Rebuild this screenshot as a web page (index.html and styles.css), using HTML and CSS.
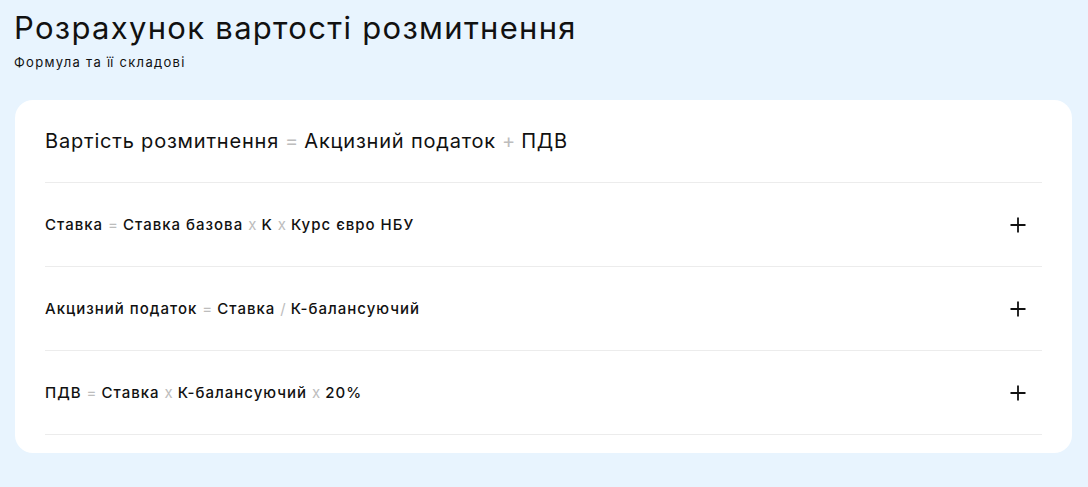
FILE: index.html
```html
<!DOCTYPE html>
<html lang="uk">
<head>
<meta charset="utf-8">
<link rel="stylesheet" href="styles.css">
</head>
<body>
<div class="page">
  <header class="head">
    <h1 class="title">Розрахунок вартості розмитнення</h1>
    <p class="subtitle">Формула та її складові</p>
  </header>
  <section class="card">
    <div class="card-head">
      <span>Вартість розмитнення</span><span class="op">=</span><span>Акцизний податок</span><span class="op">+</span><span>ПДВ</span>
    </div>
    <div class="row">
      <div class="formula"><span>Ставка</span><span class="op">=</span><span>Ставка базова</span><span class="op">x</span><span>K</span><span class="op">x</span><span>Курс євро НБУ</span></div>
      <svg class="plus" width="18" height="18" viewBox="0 0 18 18"><path d="M9 1.5v15M1.5 9h15" stroke="#111" stroke-width="1.8" fill="none"/></svg>
    </div>
    <div class="row">
      <div class="formula"><span>Акцизний податок</span><span class="op">=</span><span>Ставка</span><span class="op">/</span><span>К-балансуючий</span></div>
      <svg class="plus" width="18" height="18" viewBox="0 0 18 18"><path d="M9 1.5v15M1.5 9h15" stroke="#111" stroke-width="1.8" fill="none"/></svg>
    </div>
    <div class="row">
      <div class="formula"><span>ПДВ</span><span class="op">=</span><span>Ставка</span><span class="op">x</span><span>К-балансуючий</span><span class="op">x</span><span>20%</span></div>
      <svg class="plus" width="18" height="18" viewBox="0 0 18 18"><path d="M9 1.5v15M1.5 9h15" stroke="#111" stroke-width="1.8" fill="none"/></svg>
    </div>
  </section>
</div>
</body>
</html>
```

FILE: styles.css
```css
html, body {
  margin: 0;
  padding: 0;
  background: #e8f4fe;
}
body {
  font-family: "Inter", "Liberation Sans", sans-serif;
  color: #111;
}
.page {
  padding: 9px 16px 35px 15px;
}
.title {
  margin: 0 0 0 -1px;
  font-weight: 400;
  font-size: 31px;
  line-height: 38px;
  letter-spacing: 1.3px;
}
.subtitle {
  margin: 6px 0 0 -1px;
  font-size: 13px;
  line-height: 18px;
  letter-spacing: 1.3px;
}
.card {
  margin-top: 29px;
  background: #fff;
  border-radius: 18px;
  padding: 0 30px 18px;
}
.card-head {
  height: 82px;
  display: flex;
  align-items: center;
  gap: 6px;
  font-weight: 400;
  font-size: 20px;
  letter-spacing: 0.8px;
  border-bottom: 1px solid #ececec;
}
.row {
  height: 83px;
  display: flex;
  align-items: center;
  justify-content: space-between;
  border-bottom: 1px solid #ececec;
}
.formula {
  display: flex;
  gap: 5px;
  font-weight: 500;
  font-size: 15px;
  letter-spacing: 1px;
}
.op {
  color: #bdbdbd;
  font-weight: 400;
  letter-spacing: 0;
}
.plus {
  margin-right: 15px;
}
```
